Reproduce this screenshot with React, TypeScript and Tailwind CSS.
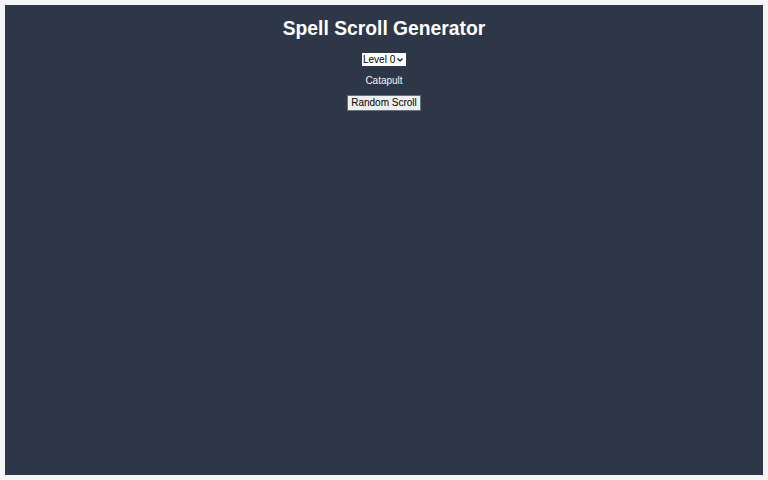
import React, { useState } from 'react';

const spells: Record<string, string[]> = {
  '0': ['Catapult', 'Light', 'Mage Hand', 'Prestidigitation'],
  '1': ['Magic Missile', 'Shield', 'Sleep'],
  '2': ['Misty Step', 'Web', 'Scorching Ray'],
  '3': ['Fireball', 'Fly', 'Counterspell'],
};

const App: React.FC = () => {
  const [level, setLevel] = useState('0');
  const [spell, setSpell] = useState('Catapult');

  const randomScroll = () => {
    const list = spells[level];
    setSpell(list[Math.floor(Math.random() * list.length)]);
  };

  return (
    <div className="h-[480px] bg-[#f3f4f6] p-[5px] font-['Liberation_Sans',Arial,sans-serif]">
      <div className="h-[470px] bg-[#2d3748] text-white flex flex-col items-center pt-[10px]">
        <h1 className="text-[19.3px] leading-[27px] font-bold">Spell Scroll Generator</h1>
        <div className="relative mt-[11px]">
          <select
            value={level}
            onChange={(e) => setLevel(e.target.value)}
            className="appearance-none block w-[44px] h-[13px] bg-white text-black text-[10px] leading-[13px] pl-[1px] pr-[10px] rounded-none outline-none"
          >
            <option value="0">Level 0</option>
            <option value="1">Level 1</option>
            <option value="2">Level 2</option>
            <option value="3">Level 3</option>
          </select>
          {/* small chevron drawn over the native arrow */}
          <svg
            className="pointer-events-none absolute right-[3px] top-[5px]"
            width="6"
            height="4"
            viewBox="0 0 6 4"
          >
            <path d="M0.5 0.5 L3 3 L5.5 0.5" fill="none" stroke="#000" strokeWidth="1.1" />
          </svg>
        </div>
        <p className="mt-[9px] text-[10px] leading-[12px] text-gray-100">{spell}</p>
        <button
          onClick={randomScroll}
          className="mt-[8px] bg-[#efefef] text-black text-[10px] leading-[12px] px-[3px] py-[1px] border border-gray-500"
        >
          Random Scroll
        </button>
      </div>
    </div>
  );
};

export default App;
